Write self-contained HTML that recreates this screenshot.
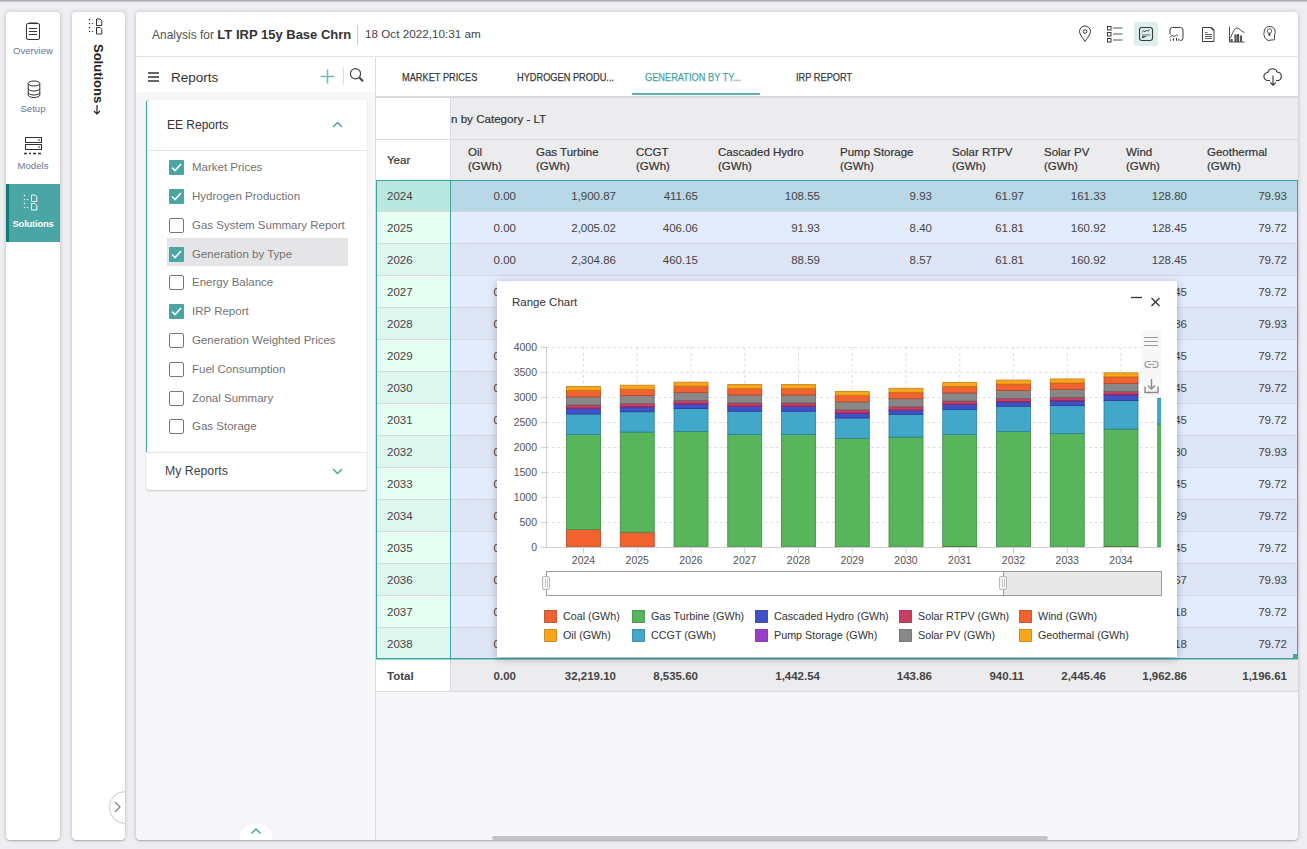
<!DOCTYPE html>
<html><head><meta charset="utf-8">
<style>
*{box-sizing:border-box;margin:0;padding:0}
html,body{width:1307px;height:849px;overflow:hidden}
body{background:#ededf2;font-family:"Liberation Sans",sans-serif;color:#333;position:relative;font-size:12px}
.abs{position:absolute}
.topline{left:0;top:0;width:1307px;height:2px;background:linear-gradient(#9a9a9e,#d8d8dc)}
.card{position:absolute;background:#fff;border-radius:4px;box-shadow:0 0 4px rgba(0,0,0,.2),0 1px 1px rgba(0,0,0,.18)}
.nav{left:6px;top:12px;width:54px;height:828px}
.nav2{left:72px;top:12px;width:53px;height:828px;overflow:hidden}
.main{left:136px;top:12px;width:1162px;height:828px;background:#f7f7f9;overflow:hidden}
.navitem{position:absolute;left:0;width:54px;text-align:center;font-size:10px;color:#5a6b8a}
.navitem .lbl{position:absolute;left:0;width:54px;text-align:center}
.hdr{left:0;top:0;width:1162px;height:45px;background:#fff;border-bottom:1px solid #e2e2e6}
.t{position:absolute;white-space:nowrap}
</style></head><body>
<div class="abs topline"></div>

<!-- left nav -->
<div class="card nav">
  <svg class="abs" style="left:19px;top:9px" width="16" height="20" viewBox="0 0 16 20" fill="none" stroke="#333" stroke-width="1">
    <rect x="1.5" y="2.5" width="13" height="16" rx="1.5"/><path d="M4 7.5h8M4 10.5h8M4 13.5h8M5 1v2M7 1v2M9 1v2M11 1v2"/>
  </svg>
  <div class="t" style="left:0;width:54px;text-align:center;top:33px;font-size:9.6px;color:#667796">Overview</div>
  <svg class="abs" style="left:20px;top:68px" width="16" height="20" viewBox="0 0 16 20" fill="none" stroke="#333" stroke-width="1">
    <ellipse cx="8" cy="3.5" rx="5.8" ry="2.5"/><path d="M2.2 3.5v11.5c0 1.4 2.6 2.5 5.8 2.5s5.8-1.1 5.8-2.5V3.5M2.2 8.5c0 1.4 2.6 2.5 5.8 2.5s5.8-1.1 5.8-2.5M2.2 12.5c0 1.4 2.6 2.5 5.8 2.5s5.8-1.1 5.8-2.5"/>
  </svg>
  <div class="t" style="left:0;width:54px;text-align:center;top:90.5px;font-size:9.6px;color:#667796">Setup</div>
  <svg class="abs" style="left:18px;top:125px" width="20" height="20" viewBox="0 0 20 20" fill="none" stroke="#333" stroke-width="1">
    <rect x="1.5" y="0.5" width="16" height="5"/><rect x="1.5" y="7.5" width="16" height="5"/><path d="M14 3h2M14 10h2"/><path d="M0 16.5h3M5 16.5h2M9 16.5h3M14 16.5h3" stroke-width="1.5"/>
  </svg>
  <div class="t" style="left:0;width:54px;text-align:center;top:148px;font-size:9.6px;color:#667796">Models</div>
  <div class="abs" style="left:0;top:172px;width:54px;height:58px;background:#4aa5a5;border-left:3px solid #137a78"></div>
  <svg class="abs" style="left:17px;top:182px" width="16" height="18" viewBox="0 0 16 18" fill="none" stroke="#fff" stroke-width="1"><g fill="#fff" stroke="none"><circle cx="1.5" cy="1.5" r="0.75"/><circle cx="1.5" cy="5.5" r="0.75"/><circle cx="1.5" cy="9.5" r="0.75"/><circle cx="1.5" cy="13.5" r="0.75"/></g><path d="M3.8 5.5h1.6M3.8 13.5h1.6" stroke-width="0.8"/><path d="M8.5 1h3.5l1.8 1.8V7.5H8.5z M8.5 9.5h3.5l1.8 1.8V16H8.5z"/></svg>
  <div class="t" style="left:0;width:54px;text-align:center;top:206px;font-size:9.4px;color:#fff;font-weight:bold;letter-spacing:-0.2px">Solutions</div>
</div>

<!-- second nav -->
<div class="card nav2">
  <svg class="abs" style="left:16px;top:6px" width="16" height="18" viewBox="0 0 16 18" fill="none" stroke="#333" stroke-width="1"><g fill="#333" stroke="none"><circle cx="1.5" cy="1.5" r="0.75"/><circle cx="1.5" cy="5.5" r="0.75"/><circle cx="1.5" cy="9.5" r="0.75"/><circle cx="1.5" cy="13.5" r="0.75"/></g><path d="M3.8 5.5h1.6M3.8 13.5h1.6" stroke-width="0.8"/><path d="M8.5 1h3.5l1.8 1.8V7.5H8.5z M8.5 9.5h3.5l1.8 1.8V16H8.5z"/></svg>
  <div class="t" style="left:34px;top:32px;transform-origin:0 0;transform:rotate(90deg);font-size:13px;font-weight:bold;color:#222">Solutions</div><svg class="abs" style="left:20px;top:93px" width="10" height="10" viewBox="0 0 10 10" fill="none" stroke="#222" stroke-width="1.2"><path d="M5 0v9M2 6l3 3 3-3"/></svg>
  <div class="abs" style="left:37px;top:779px;width:33px;height:33px;border-radius:50%;background:#fff;border:1px solid #d0d0d0;box-shadow:0 0 2px rgba(0,0,0,.1)"></div>
  <svg class="abs" style="left:41px;top:789px" width="10" height="12" viewBox="0 0 10 12" fill="none" stroke="#888" stroke-width="1.3"><path d="M2 1l5 5-5 5"/></svg>
</div>

<!-- main -->
<div class="card main">
  <div class="abs hdr">
    <div class="t" style="left:16px;top:15px;font-size:12px;color:#555">Analysis for <b style="font-size:13px;color:#333">LT IRP 15y Base Chrn</b></div>
    <div class="abs" style="left:221px;top:13px;width:1px;height:20px;background:#ccc"></div>
    <div class="t" style="left:229px;top:15px;font-size:11.7px;color:#444">18 Oct 2022,10:31 am</div>
  </div>
    <!-- HDRICONS -->
    <svg class="abs" style="left:942px;top:13px" width="14" height="18" viewBox="0 0 14 18" fill="none" stroke="#3a3a3a" stroke-width="1"><path d="M7 16.5C4 12 1.5 9 1.5 6.5a5.5 5.5 0 0 1 11 0C12.5 9 10 12 7 16.5z"/><circle cx="7" cy="6.5" r="1.8"/></svg>
    <svg class="abs" style="left:970px;top:13px" width="18" height="18" viewBox="0 0 18 18" fill="none" stroke="#3a3a3a" stroke-width="1"><rect x="1.5" y="1.5" width="3.5" height="3.5"/><rect x="1.5" y="7.5" width="3.5" height="3.5"/><rect x="1.5" y="13.5" width="3.5" height="3.5"/><path d="M7 3h9.5M7 9h9.5M7 15h9.5" stroke="#555"/></svg>
    <div class="abs" style="left:998px;top:10px;width:24px;height:24px;border-radius:3px;background:#dcefef"></div>
    <svg class="abs" style="left:1002px;top:14px" width="16" height="16" viewBox="0 0 16 16" fill="none" stroke="#3a3a3a" stroke-width="1"><rect x="1.5" y="1.5" width="13" height="13" rx="2.5" stroke-width="1.1"/><path d="M4 6.5l1.5-2 1.5 1.5 1.5-2 1.5 1.5 1.5-2" stroke-width="0.8"/><path d="M4 8.8h8.5" stroke="#888" stroke-width="1.3"/><path d="M4 10.2h5.5L4 12.2z" fill="#333" stroke="none"/></svg>
    <svg class="abs" style="left:1032px;top:14px" width="16" height="16" viewBox="0 0 16 16" fill="none" stroke="#3a3a3a" stroke-width="1"><path d="M2 8.5V4a2.5 2.5 0 0 1 2.5-2.5h8A2.5 2.5 0 0 1 15 4v8a2.5 2.5 0 0 1-2.5 2.5H12"/><path d="M1.5 11.5l2.5-2 2 1 2.5-1.5 1.5 1" stroke-width="0.9"/><path d="M2.5 14.8v-1.3M5.5 14.8v-2.6M8.5 14.8v-3M10.8 14.8v-2" stroke-width="1.1"/></svg>
    <svg class="abs" style="left:1065px;top:14px" width="15" height="17" viewBox="0 0 15 17" fill="none" stroke="#3a3a3a" stroke-width="1"><path d="M1.5 1.5h8.5l3 3v11h-11.5z"/><path d="M10 1.5l3 3" stroke-width="1.6"/><path d="M4 6.5h2.5" stroke-width="0.8"/><path d="M4 8.5h7M4 10.5h7M4 12.5h7" stroke="#555" stroke-width="1"/></svg>
    <svg class="abs" style="left:1092px;top:14px" width="17" height="17" viewBox="0 0 17 17" fill="none" stroke="#3a3a3a" stroke-width="1"><path d="M1.5 0.5v15.5h15" stroke-width="0.9"/><path d="M2.5 12C4.5 7 6.5 2 9 2s4 3.5 7.5 4.5" stroke-width="0.9"/><path d="M3.5 16v-3M7.5 16v-7.5M10 16v-8M13 16v-6.5" stroke="#555" stroke-width="2.2"/></svg>
    <svg class="abs" style="left:1127px;top:14px" width="14" height="16" viewBox="0 0 14 16" fill="none" stroke="#3a3a3a" stroke-width="1"><path d="M5 14.5C4 13 1 12.5 1.5 10C0.5 9 0.8 7.5 1.2 6.5C1 2.5 3.5 0.5 6.5 0.5C10 0.5 12.5 3 12.2 6.5C12 8.5 11 9.5 11.5 11C12 12.5 11.5 13.5 11 14C9.5 13.5 7 14.5 5 14.5z"/><circle cx="6.5" cy="5" r="2.2" stroke="#666"/><path d="M5.6 7.3h1.8v2.5H5.6z" fill="#333" stroke="none"/></svg>
    <!-- /HDRICONS -->
  <!-- reports panel -->
  <div class="abs" style="left:0;top:45px;width:239px;height:35px;background:#fff"></div>
  <div class="abs" style="left:239px;top:45px;width:1px;height:783px;background:#dcdce0"></div>
  <svg class="abs" style="left:12px;top:60px" width="12" height="10" viewBox="0 0 12 10" stroke="#333" stroke-width="1.5"><path d="M0 1h11M0 5h11M0 9h11"/></svg>
  <div class="t" style="left:35px;top:58px;font-size:13.5px;color:#333">Reports</div>
  <svg class="abs" style="left:183px;top:56px" width="17" height="17" viewBox="0 0 17 17" stroke="#72bdbd" stroke-width="1.6"><path d="M8.5 1.5v14M1.5 8.5h14"/></svg>
  <div class="abs" style="left:207px;top:55px;width:1px;height:18px;background:#ddd"></div>
  <svg class="abs" style="left:213px;top:55px" width="16" height="16" viewBox="0 0 16 16" fill="none" stroke="#444" stroke-width="1.2"><circle cx="6.5" cy="6.8" r="5.1"/><path d="M10.2 10.5l3.8 3.8" stroke-width="2"/></svg>

  <div class="abs" style="left:10px;top:88px;width:221px;height:353px;background:#fff;border-left:1px solid #4aa5a5;box-shadow:0 1px 2px rgba(0,0,0,.15);border-radius:3px 0 0 0"></div>
  <div class="t" style="left:31px;top:106px;font-size:12px;color:#333">EE Reports</div>
  <svg class="abs" style="left:196px;top:109px" width="11" height="7" viewBox="0 0 11 7" fill="none" stroke="#4aa5a5" stroke-width="1.5"><path d="M1 6l4.5-4.5L10 6"/></svg>
  <div class="abs" style="left:11px;top:138px;width:220px;height:1px;background:#e6e6ea"></div>
  <div class="abs" style="left:31px;top:226px;width:181px;height:28px;background:#e5e5e7"></div>
  <div class="abs" style="left:33px;top:148px;width:15px;height:15px;background:#4aa5a5;border-radius:1px"></div><svg class="abs" style="left:33px;top:148px" width="15" height="15" viewBox="0 0 15 15" fill="none" stroke="#fff" stroke-width="1.6"><path d="M3 7.5l3 3 6-6.5"/></svg>
  <div class="t" style="left:56px;top:149px;font-size:11.5px;color:#727272">Market Prices</div>
  <div class="abs" style="left:33px;top:177px;width:15px;height:15px;background:#4aa5a5;border-radius:1px"></div><svg class="abs" style="left:33px;top:177px" width="15" height="15" viewBox="0 0 15 15" fill="none" stroke="#fff" stroke-width="1.6"><path d="M3 7.5l3 3 6-6.5"/></svg>
  <div class="t" style="left:56px;top:178px;font-size:11.5px;color:#727272">Hydrogen Production</div>
  <div class="abs" style="left:33px;top:206px;width:15px;height:15px;border:1.5px solid #777;border-radius:2px;background:#fff"></div>
  <div class="t" style="left:56px;top:207px;font-size:11.5px;color:#727272">Gas System Summary Report</div>
  <div class="abs" style="left:33px;top:235px;width:15px;height:15px;background:#4aa5a5;border-radius:1px"></div><svg class="abs" style="left:33px;top:235px" width="15" height="15" viewBox="0 0 15 15" fill="none" stroke="#fff" stroke-width="1.6"><path d="M3 7.5l3 3 6-6.5"/></svg>
  <div class="t" style="left:56px;top:236px;font-size:11.5px;color:#727272">Generation by Type</div>
  <div class="abs" style="left:33px;top:263px;width:15px;height:15px;border:1.5px solid #777;border-radius:2px;background:#fff"></div>
  <div class="t" style="left:56px;top:264px;font-size:11.5px;color:#727272">Energy Balance</div>
  <div class="abs" style="left:33px;top:292px;width:15px;height:15px;background:#4aa5a5;border-radius:1px"></div><svg class="abs" style="left:33px;top:292px" width="15" height="15" viewBox="0 0 15 15" fill="none" stroke="#fff" stroke-width="1.6"><path d="M3 7.5l3 3 6-6.5"/></svg>
  <div class="t" style="left:56px;top:293px;font-size:11.5px;color:#727272">IRP Report</div>
  <div class="abs" style="left:33px;top:321px;width:15px;height:15px;border:1.5px solid #777;border-radius:2px;background:#fff"></div>
  <div class="t" style="left:56px;top:322px;font-size:11.5px;color:#727272">Generation Weighted Prices</div>
  <div class="abs" style="left:33px;top:350px;width:15px;height:15px;border:1.5px solid #777;border-radius:2px;background:#fff"></div>
  <div class="t" style="left:56px;top:351px;font-size:11.5px;color:#727272">Fuel Consumption</div>
  <div class="abs" style="left:33px;top:379px;width:15px;height:15px;border:1.5px solid #777;border-radius:2px;background:#fff"></div>
  <div class="t" style="left:56px;top:380px;font-size:11.5px;color:#727272">Zonal Summary</div>
  <div class="abs" style="left:33px;top:407px;width:15px;height:15px;border:1.5px solid #777;border-radius:2px;background:#fff"></div>
  <div class="t" style="left:56px;top:408px;font-size:11.5px;color:#727272">Gas Storage</div>
  <div class="abs" style="left:10px;top:440px;width:221px;height:38px;background:#fff;box-shadow:0 1px 2px rgba(0,0,0,.2);border-top:1px solid #e6e6ea;border-radius:0 0 3px 3px"></div>
  <div class="t" style="left:29px;top:452px;font-size:12.3px;color:#444">My Reports</div>
  <svg class="abs" style="left:196px;top:456px" width="11" height="7" viewBox="0 0 11 7" fill="none" stroke="#4aa5a5" stroke-width="1.5"><path d="M1 1l4.5 4.5L10 1"/></svg>
  <div class="abs" style="left:104px;top:812px;width:32px;height:24px;border-radius:50%;background:#fff"></div>
  <svg class="abs" style="left:114px;top:815px" width="12" height="8" viewBox="0 0 12 8" fill="none" stroke="#4aa5a5" stroke-width="1.5"><path d="M1.5 6.5l4.5-4.5 4.5 4.5"/></svg>
  <!-- TABLE -->
  <div class="abs" style="left:240px;top:45px;width:922px;height:39px;background:#fff"></div>
  <div class="abs" style="left:240px;top:84px;width:922px;height:2px;background:#dadade"></div>
  <div class="t" style="left:266px;top:59px;font-size:10.5px;color:#3a3a3a;transform:scaleX(0.88);transform-origin:0 0;-webkit-text-stroke:0.25px #3a3a3a">MARKET PRICES</div>
  <div class="t" style="left:381px;top:59px;font-size:10.5px;color:#3a3a3a;transform:scaleX(0.88);transform-origin:0 0;-webkit-text-stroke:0.25px #3a3a3a">HYDROGEN PRODU...</div>
  <div class="t" style="left:509px;top:59px;font-size:10.5px;color:#4aa5a5;transform:scaleX(0.88);transform-origin:0 0;-webkit-text-stroke:0.25px #4aa5a5">GENERATION BY TY...</div>
  <div class="t" style="left:660px;top:59px;font-size:10.5px;color:#3a3a3a;transform:scaleX(0.88);transform-origin:0 0;-webkit-text-stroke:0.25px #3a3a3a">IRP REPORT</div>
  <div class="abs" style="left:496px;top:81px;width:128px;height:2px;background:#5fb3b3"></div>
  <svg class="abs" style="left:1126px;top:54px" width="22" height="21" viewBox="0 0 22 21" fill="none" stroke="#333" stroke-width="1.1"><path d="M8 14.5H6A4 4 0 0 1 5.8 6.5A4.8 4.8 0 0 1 15 6A4.4 4.4 0 0 1 16.5 14.5H14"/><path d="M11 9.5V19.2M8.2 16.4l2.8 2.8 2.8-2.8"/></svg>
  <div class="abs" style="left:240px;top:86px;width:922px;height:82px;background:#ececef"></div>
  <div class="abs" style="left:240px;top:86px;width:74px;height:82px;background:#fff"></div>
  <div class="abs" style="left:240px;top:127px;width:922px;height:1px;background:#dcdce0"></div>
  <div class="abs" style="left:314px;top:86px;width:1px;height:82px;background:#dcdce0"></div>
  <div class="t" style="left:315px;top:100px;font-size:11.6px;color:#333;-webkit-text-stroke:0.2px #333">n by Category - LT</div>
  <div class="t" style="left:251px;top:142px;font-size:11.5px;color:#333;-webkit-text-stroke:0.2px #333">Year</div>
  <div class="t" style="left:332px;top:133px;font-size:11.5px;line-height:14px;color:#333;-webkit-text-stroke:0.2px #333">Oil<br>(GWh)</div>
  <div class="t" style="left:400px;top:133px;font-size:11.5px;line-height:14px;color:#333;-webkit-text-stroke:0.2px #333">Gas Turbine<br>(GWh)</div>
  <div class="t" style="left:500px;top:133px;font-size:11.5px;line-height:14px;color:#333;-webkit-text-stroke:0.2px #333">CCGT<br>(GWh)</div>
  <div class="t" style="left:582px;top:133px;font-size:11.5px;line-height:14px;color:#333;-webkit-text-stroke:0.2px #333">Cascaded Hydro<br>(GWh)</div>
  <div class="t" style="left:704px;top:133px;font-size:11.5px;line-height:14px;color:#333;-webkit-text-stroke:0.2px #333">Pump Storage<br>(GWh)</div>
  <div class="t" style="left:816px;top:133px;font-size:11.5px;line-height:14px;color:#333;-webkit-text-stroke:0.2px #333">Solar RTPV<br>(GWh)</div>
  <div class="t" style="left:908px;top:133px;font-size:11.5px;line-height:14px;color:#333;-webkit-text-stroke:0.2px #333">Solar PV<br>(GWh)</div>
  <div class="t" style="left:990px;top:133px;font-size:11.5px;line-height:14px;color:#333;-webkit-text-stroke:0.2px #333">Wind<br>(GWh)</div>
  <div class="t" style="left:1071px;top:133px;font-size:11.5px;line-height:14px;color:#333;-webkit-text-stroke:0.2px #333">Geothermal<br>(GWh)</div>
  <div class="abs" style="left:240px;top:168px;width:74px;height:32px;background:#b8e8de"></div>
  <div class="abs" style="left:314px;top:168px;width:847px;height:32px;background:#b8d8e8"></div>
  <div class="abs" style="left:240px;top:199px;width:921px;height:1px;background:#d6d8dc"></div>
  <div class="t" style="left:251px;top:178px;font-size:11.5px;color:#444">2024</div>
  <div class="t" style="left:322px;width:58px;text-align:right;top:178px;font-size:11.5px;color:#444">0.00</div>
  <div class="t" style="left:390px;width:90px;text-align:right;top:178px;font-size:11.5px;color:#444">1,900.87</div>
  <div class="t" style="left:490px;width:72px;text-align:right;top:178px;font-size:11.5px;color:#444">411.65</div>
  <div class="t" style="left:572px;width:112px;text-align:right;top:178px;font-size:11.5px;color:#444">108.55</div>
  <div class="t" style="left:694px;width:102px;text-align:right;top:178px;font-size:11.5px;color:#444">9.93</div>
  <div class="t" style="left:806px;width:82px;text-align:right;top:178px;font-size:11.5px;color:#444">61.97</div>
  <div class="t" style="left:898px;width:72px;text-align:right;top:178px;font-size:11.5px;color:#444">161.33</div>
  <div class="t" style="left:980px;width:71px;text-align:right;top:178px;font-size:11.5px;color:#444">128.80</div>
  <div class="t" style="left:1061px;width:90px;text-align:right;top:178px;font-size:11.5px;color:#444">79.93</div>
  <div class="abs" style="left:240px;top:200px;width:74px;height:32px;background:#e6fff2"></div>
  <div class="abs" style="left:314px;top:200px;width:847px;height:32px;background:#e3ecfd"></div>
  <div class="abs" style="left:240px;top:231px;width:921px;height:1px;background:#d6d8dc"></div>
  <div class="t" style="left:251px;top:210px;font-size:11.5px;color:#444">2025</div>
  <div class="t" style="left:322px;width:58px;text-align:right;top:210px;font-size:11.5px;color:#444">0.00</div>
  <div class="t" style="left:390px;width:90px;text-align:right;top:210px;font-size:11.5px;color:#444">2,005.02</div>
  <div class="t" style="left:490px;width:72px;text-align:right;top:210px;font-size:11.5px;color:#444">406.06</div>
  <div class="t" style="left:572px;width:112px;text-align:right;top:210px;font-size:11.5px;color:#444">91.93</div>
  <div class="t" style="left:694px;width:102px;text-align:right;top:210px;font-size:11.5px;color:#444">8.40</div>
  <div class="t" style="left:806px;width:82px;text-align:right;top:210px;font-size:11.5px;color:#444">61.81</div>
  <div class="t" style="left:898px;width:72px;text-align:right;top:210px;font-size:11.5px;color:#444">160.92</div>
  <div class="t" style="left:980px;width:71px;text-align:right;top:210px;font-size:11.5px;color:#444">128.45</div>
  <div class="t" style="left:1061px;width:90px;text-align:right;top:210px;font-size:11.5px;color:#444">79.72</div>
  <div class="abs" style="left:240px;top:232px;width:74px;height:32px;background:#def7ee"></div>
  <div class="abs" style="left:314px;top:232px;width:847px;height:32px;background:#dde5f7"></div>
  <div class="abs" style="left:240px;top:263px;width:921px;height:1px;background:#d6d8dc"></div>
  <div class="t" style="left:251px;top:242px;font-size:11.5px;color:#444">2026</div>
  <div class="t" style="left:322px;width:58px;text-align:right;top:242px;font-size:11.5px;color:#444">0.00</div>
  <div class="t" style="left:390px;width:90px;text-align:right;top:242px;font-size:11.5px;color:#444">2,304.86</div>
  <div class="t" style="left:490px;width:72px;text-align:right;top:242px;font-size:11.5px;color:#444">460.15</div>
  <div class="t" style="left:572px;width:112px;text-align:right;top:242px;font-size:11.5px;color:#444">88.59</div>
  <div class="t" style="left:694px;width:102px;text-align:right;top:242px;font-size:11.5px;color:#444">8.57</div>
  <div class="t" style="left:806px;width:82px;text-align:right;top:242px;font-size:11.5px;color:#444">61.81</div>
  <div class="t" style="left:898px;width:72px;text-align:right;top:242px;font-size:11.5px;color:#444">160.92</div>
  <div class="t" style="left:980px;width:71px;text-align:right;top:242px;font-size:11.5px;color:#444">128.45</div>
  <div class="t" style="left:1061px;width:90px;text-align:right;top:242px;font-size:11.5px;color:#444">79.72</div>
  <div class="abs" style="left:240px;top:264px;width:74px;height:32px;background:#e6fff2"></div>
  <div class="abs" style="left:314px;top:264px;width:847px;height:32px;background:#e3ecfd"></div>
  <div class="abs" style="left:240px;top:295px;width:921px;height:1px;background:#d6d8dc"></div>
  <div class="t" style="left:251px;top:274px;font-size:11.5px;color:#444">2027</div>
  <div class="t" style="left:322px;width:58px;text-align:right;top:274px;font-size:11.5px;color:#444">0.00</div>
  <div class="t" style="left:980px;width:71px;text-align:right;top:274px;font-size:11.5px;color:#444">128.45</div>
  <div class="t" style="left:1061px;width:90px;text-align:right;top:274px;font-size:11.5px;color:#444">79.72</div>
  <div class="abs" style="left:240px;top:296px;width:74px;height:32px;background:#def7ee"></div>
  <div class="abs" style="left:314px;top:296px;width:847px;height:32px;background:#dde5f7"></div>
  <div class="abs" style="left:240px;top:327px;width:921px;height:1px;background:#d6d8dc"></div>
  <div class="t" style="left:251px;top:306px;font-size:11.5px;color:#444">2028</div>
  <div class="t" style="left:322px;width:58px;text-align:right;top:306px;font-size:11.5px;color:#444">0.00</div>
  <div class="t" style="left:980px;width:71px;text-align:right;top:306px;font-size:11.5px;color:#444">127.36</div>
  <div class="t" style="left:1061px;width:90px;text-align:right;top:306px;font-size:11.5px;color:#444">79.93</div>
  <div class="abs" style="left:240px;top:328px;width:74px;height:32px;background:#e6fff2"></div>
  <div class="abs" style="left:314px;top:328px;width:847px;height:32px;background:#e3ecfd"></div>
  <div class="abs" style="left:240px;top:359px;width:921px;height:1px;background:#d6d8dc"></div>
  <div class="t" style="left:251px;top:338px;font-size:11.5px;color:#444">2029</div>
  <div class="t" style="left:322px;width:58px;text-align:right;top:338px;font-size:11.5px;color:#444">0.00</div>
  <div class="t" style="left:980px;width:71px;text-align:right;top:338px;font-size:11.5px;color:#444">128.45</div>
  <div class="t" style="left:1061px;width:90px;text-align:right;top:338px;font-size:11.5px;color:#444">79.72</div>
  <div class="abs" style="left:240px;top:360px;width:74px;height:32px;background:#def7ee"></div>
  <div class="abs" style="left:314px;top:360px;width:847px;height:32px;background:#dde5f7"></div>
  <div class="abs" style="left:240px;top:391px;width:921px;height:1px;background:#d6d8dc"></div>
  <div class="t" style="left:251px;top:370px;font-size:11.5px;color:#444">2030</div>
  <div class="t" style="left:322px;width:58px;text-align:right;top:370px;font-size:11.5px;color:#444">0.00</div>
  <div class="t" style="left:980px;width:71px;text-align:right;top:370px;font-size:11.5px;color:#444">128.45</div>
  <div class="t" style="left:1061px;width:90px;text-align:right;top:370px;font-size:11.5px;color:#444">79.72</div>
  <div class="abs" style="left:240px;top:392px;width:74px;height:32px;background:#e6fff2"></div>
  <div class="abs" style="left:314px;top:392px;width:847px;height:32px;background:#e3ecfd"></div>
  <div class="abs" style="left:240px;top:423px;width:921px;height:1px;background:#d6d8dc"></div>
  <div class="t" style="left:251px;top:402px;font-size:11.5px;color:#444">2031</div>
  <div class="t" style="left:322px;width:58px;text-align:right;top:402px;font-size:11.5px;color:#444">0.00</div>
  <div class="t" style="left:980px;width:71px;text-align:right;top:402px;font-size:11.5px;color:#444">128.45</div>
  <div class="t" style="left:1061px;width:90px;text-align:right;top:402px;font-size:11.5px;color:#444">79.72</div>
  <div class="abs" style="left:240px;top:424px;width:74px;height:32px;background:#def7ee"></div>
  <div class="abs" style="left:314px;top:424px;width:847px;height:32px;background:#dde5f7"></div>
  <div class="abs" style="left:240px;top:455px;width:921px;height:1px;background:#d6d8dc"></div>
  <div class="t" style="left:251px;top:434px;font-size:11.5px;color:#444">2032</div>
  <div class="t" style="left:322px;width:58px;text-align:right;top:434px;font-size:11.5px;color:#444">0.00</div>
  <div class="t" style="left:980px;width:71px;text-align:right;top:434px;font-size:11.5px;color:#444">126.30</div>
  <div class="t" style="left:1061px;width:90px;text-align:right;top:434px;font-size:11.5px;color:#444">79.93</div>
  <div class="abs" style="left:240px;top:456px;width:74px;height:32px;background:#e6fff2"></div>
  <div class="abs" style="left:314px;top:456px;width:847px;height:32px;background:#e3ecfd"></div>
  <div class="abs" style="left:240px;top:487px;width:921px;height:1px;background:#d6d8dc"></div>
  <div class="t" style="left:251px;top:466px;font-size:11.5px;color:#444">2033</div>
  <div class="t" style="left:322px;width:58px;text-align:right;top:466px;font-size:11.5px;color:#444">0.00</div>
  <div class="t" style="left:980px;width:71px;text-align:right;top:466px;font-size:11.5px;color:#444">128.45</div>
  <div class="t" style="left:1061px;width:90px;text-align:right;top:466px;font-size:11.5px;color:#444">79.72</div>
  <div class="abs" style="left:240px;top:488px;width:74px;height:32px;background:#def7ee"></div>
  <div class="abs" style="left:314px;top:488px;width:847px;height:32px;background:#dde5f7"></div>
  <div class="abs" style="left:240px;top:519px;width:921px;height:1px;background:#d6d8dc"></div>
  <div class="t" style="left:251px;top:498px;font-size:11.5px;color:#444">2034</div>
  <div class="t" style="left:322px;width:58px;text-align:right;top:498px;font-size:11.5px;color:#444">0.00</div>
  <div class="t" style="left:980px;width:71px;text-align:right;top:498px;font-size:11.5px;color:#444">130.29</div>
  <div class="t" style="left:1061px;width:90px;text-align:right;top:498px;font-size:11.5px;color:#444">79.72</div>
  <div class="abs" style="left:240px;top:520px;width:74px;height:32px;background:#e6fff2"></div>
  <div class="abs" style="left:314px;top:520px;width:847px;height:32px;background:#e3ecfd"></div>
  <div class="abs" style="left:240px;top:551px;width:921px;height:1px;background:#d6d8dc"></div>
  <div class="t" style="left:251px;top:530px;font-size:11.5px;color:#444">2035</div>
  <div class="t" style="left:322px;width:58px;text-align:right;top:530px;font-size:11.5px;color:#444">0.00</div>
  <div class="t" style="left:980px;width:71px;text-align:right;top:530px;font-size:11.5px;color:#444">128.45</div>
  <div class="t" style="left:1061px;width:90px;text-align:right;top:530px;font-size:11.5px;color:#444">79.72</div>
  <div class="abs" style="left:240px;top:552px;width:74px;height:32px;background:#def7ee"></div>
  <div class="abs" style="left:314px;top:552px;width:847px;height:32px;background:#dde5f7"></div>
  <div class="abs" style="left:240px;top:583px;width:921px;height:1px;background:#d6d8dc"></div>
  <div class="t" style="left:251px;top:562px;font-size:11.5px;color:#444">2036</div>
  <div class="t" style="left:322px;width:58px;text-align:right;top:562px;font-size:11.5px;color:#444">0.00</div>
  <div class="t" style="left:980px;width:71px;text-align:right;top:562px;font-size:11.5px;color:#444">131.67</div>
  <div class="t" style="left:1061px;width:90px;text-align:right;top:562px;font-size:11.5px;color:#444">79.93</div>
  <div class="abs" style="left:240px;top:584px;width:74px;height:32px;background:#e6fff2"></div>
  <div class="abs" style="left:314px;top:584px;width:847px;height:32px;background:#e3ecfd"></div>
  <div class="abs" style="left:240px;top:615px;width:921px;height:1px;background:#d6d8dc"></div>
  <div class="t" style="left:251px;top:594px;font-size:11.5px;color:#444">2037</div>
  <div class="t" style="left:322px;width:58px;text-align:right;top:594px;font-size:11.5px;color:#444">0.00</div>
  <div class="t" style="left:980px;width:71px;text-align:right;top:594px;font-size:11.5px;color:#444">130.18</div>
  <div class="t" style="left:1061px;width:90px;text-align:right;top:594px;font-size:11.5px;color:#444">79.72</div>
  <div class="abs" style="left:240px;top:616px;width:74px;height:32px;background:#def7ee"></div>
  <div class="abs" style="left:314px;top:616px;width:847px;height:32px;background:#dde5f7"></div>
  <div class="t" style="left:251px;top:626px;font-size:11.5px;color:#444">2038</div>
  <div class="t" style="left:322px;width:58px;text-align:right;top:626px;font-size:11.5px;color:#444">0.00</div>
  <div class="t" style="left:980px;width:71px;text-align:right;top:626px;font-size:11.5px;color:#444">130.18</div>
  <div class="t" style="left:1061px;width:90px;text-align:right;top:626px;font-size:11.5px;color:#444">79.72</div>
  <div class="abs" style="left:240px;top:168px;width:922px;height:479px;border:1px solid #3fa3a0;border-width:1px 1px 1px 1px;box-shadow:0 1px 0 rgba(63,163,160,.45)"></div>
  <div class="abs" style="left:314px;top:168px;width:1px;height:480px;background:#3fa3a0"></div>
  <div class="abs" style="left:1157px;top:642px;width:5px;height:5px;background:#3fa3a0"></div>
  <div class="abs" style="left:240px;top:648px;width:74px;height:31px;background:#fff"></div>
  <div class="abs" style="left:314px;top:648px;width:848px;height:31px;background:#ececef"></div>
  <div class="abs" style="left:240px;top:679px;width:922px;height:1px;background:#dcdce0"></div>
  <div class="t" style="left:251px;top:658px;font-size:11.5px;font-weight:bold;color:#444">Total</div>
  <div class="t" style="left:322px;width:58px;text-align:right;top:658px;font-size:11.5px;font-weight:bold;color:#444">0.00</div>
  <div class="t" style="left:390px;width:90px;text-align:right;top:658px;font-size:11.5px;font-weight:bold;color:#444">32,219.10</div>
  <div class="t" style="left:490px;width:72px;text-align:right;top:658px;font-size:11.5px;font-weight:bold;color:#444">8,535.60</div>
  <div class="t" style="left:572px;width:112px;text-align:right;top:658px;font-size:11.5px;font-weight:bold;color:#444">1,442.54</div>
  <div class="t" style="left:694px;width:102px;text-align:right;top:658px;font-size:11.5px;font-weight:bold;color:#444">143.86</div>
  <div class="t" style="left:806px;width:82px;text-align:right;top:658px;font-size:11.5px;font-weight:bold;color:#444">940.11</div>
  <div class="t" style="left:898px;width:72px;text-align:right;top:658px;font-size:11.5px;font-weight:bold;color:#444">2,445.46</div>
  <div class="t" style="left:980px;width:71px;text-align:right;top:658px;font-size:11.5px;font-weight:bold;color:#444">1,962.86</div>
  <div class="t" style="left:1061px;width:90px;text-align:right;top:658px;font-size:11.5px;font-weight:bold;color:#444">1,196.61</div>
  <div class="abs" style="left:356px;top:824px;width:556px;height:4px;border-radius:2px;background:#c4c4c8"></div>
  <div class="abs" style="left:314px;top:648px;width:1px;height:31px;background:#d8d8dc"></div>
  <!-- CHART -->
</div>
<!-- POPUP --><div class="abs" style="left:497px;top:281px;width:680px;height:376px;background:#fff;box-shadow:0 2px 8px rgba(0,0,0,.25)"><svg class="abs" style="left:0;top:0" width="680" height="376" viewBox="0 0 680 376" font-family="Liberation Sans, sans-serif">
<line x1="49" x2="664" y1="266.5" y2="266.5" stroke="#dedede" stroke-dasharray="3 2.6"/>
<line x1="44" x2="49" y1="266.5" y2="266.5" stroke="#cfcfcf"/>
<text x="40" y="270" text-anchor="end" font-size="10.5" fill="#555">0</text>
<line x1="49" x2="664" y1="241.5" y2="241.5" stroke="#dedede" stroke-dasharray="3 2.6"/>
<line x1="44" x2="49" y1="241.5" y2="241.5" stroke="#cfcfcf"/>
<text x="40" y="245" text-anchor="end" font-size="10.5" fill="#555">500</text>
<line x1="49" x2="664" y1="216.5" y2="216.5" stroke="#dedede" stroke-dasharray="3 2.6"/>
<line x1="44" x2="49" y1="216.5" y2="216.5" stroke="#cfcfcf"/>
<text x="40" y="220" text-anchor="end" font-size="10.5" fill="#555">1000</text>
<line x1="49" x2="664" y1="191.5" y2="191.5" stroke="#dedede" stroke-dasharray="3 2.6"/>
<line x1="44" x2="49" y1="191.5" y2="191.5" stroke="#cfcfcf"/>
<text x="40" y="195" text-anchor="end" font-size="10.5" fill="#555">1500</text>
<line x1="49" x2="664" y1="166.5" y2="166.5" stroke="#dedede" stroke-dasharray="3 2.6"/>
<line x1="44" x2="49" y1="166.5" y2="166.5" stroke="#cfcfcf"/>
<text x="40" y="170" text-anchor="end" font-size="10.5" fill="#555">2000</text>
<line x1="49" x2="664" y1="141.5" y2="141.5" stroke="#dedede" stroke-dasharray="3 2.6"/>
<line x1="44" x2="49" y1="141.5" y2="141.5" stroke="#cfcfcf"/>
<text x="40" y="145" text-anchor="end" font-size="10.5" fill="#555">2500</text>
<line x1="49" x2="664" y1="116.5" y2="116.5" stroke="#dedede" stroke-dasharray="3 2.6"/>
<line x1="44" x2="49" y1="116.5" y2="116.5" stroke="#cfcfcf"/>
<text x="40" y="120" text-anchor="end" font-size="10.5" fill="#555">3000</text>
<line x1="49" x2="664" y1="91.5" y2="91.5" stroke="#dedede" stroke-dasharray="3 2.6"/>
<line x1="44" x2="49" y1="91.5" y2="91.5" stroke="#cfcfcf"/>
<text x="40" y="95" text-anchor="end" font-size="10.5" fill="#555">3500</text>
<line x1="49" x2="664" y1="66.5" y2="66.5" stroke="#dedede" stroke-dasharray="3 2.6"/>
<line x1="44" x2="49" y1="66.5" y2="66.5" stroke="#cfcfcf"/>
<text x="40" y="70" text-anchor="end" font-size="10.5" fill="#555">4000</text>
<line x1="86.5" x2="86.5" y1="66" y2="266" stroke="#dedede" stroke-dasharray="3 2.6"/>
<line x1="140.25" x2="140.25" y1="66" y2="266" stroke="#dedede" stroke-dasharray="3 2.6"/>
<line x1="194.0" x2="194.0" y1="66" y2="266" stroke="#dedede" stroke-dasharray="3 2.6"/>
<line x1="247.75" x2="247.75" y1="66" y2="266" stroke="#dedede" stroke-dasharray="3 2.6"/>
<line x1="301.5" x2="301.5" y1="66" y2="266" stroke="#dedede" stroke-dasharray="3 2.6"/>
<line x1="355.25" x2="355.25" y1="66" y2="266" stroke="#dedede" stroke-dasharray="3 2.6"/>
<line x1="409.0" x2="409.0" y1="66" y2="266" stroke="#dedede" stroke-dasharray="3 2.6"/>
<line x1="462.75" x2="462.75" y1="66" y2="266" stroke="#dedede" stroke-dasharray="3 2.6"/>
<line x1="516.5" x2="516.5" y1="66" y2="266" stroke="#dedede" stroke-dasharray="3 2.6"/>
<line x1="570.25" x2="570.25" y1="66" y2="266" stroke="#dedede" stroke-dasharray="3 2.6"/>
<line x1="624.0" x2="624.0" y1="66" y2="266" stroke="#dedede" stroke-dasharray="3 2.6"/>
<defs><clipPath id="pc"><rect x="49" y="19" width="615" height="260"/></clipPath></defs>
<g clip-path="url(#pc)">
<rect x="69.5" y="248.55" width="34" height="17.25" fill="#f26130" stroke="#b9471f" stroke-width="0.8"/>
<rect x="69.5" y="153.51" width="34" height="95.04" fill="#58b55b" stroke="#3e8a41" stroke-width="0.8"/>
<rect x="69.5" y="132.92" width="34" height="20.58" fill="#41a8c9" stroke="#2e7e99" stroke-width="0.8"/>
<rect x="69.5" y="127.50" width="34" height="5.43" fill="#3f51c8" stroke="#2d3a94" stroke-width="0.8"/>
<rect x="69.5" y="127.00" width="34" height="0.50" fill="#9a3fc8" stroke="#702c93" stroke-width="0.8"/>
<rect x="69.5" y="123.90" width="34" height="3.10" fill="#c93d62" stroke="#962c48" stroke-width="0.8"/>
<rect x="69.5" y="115.83" width="34" height="8.07" fill="#888888" stroke="#666666" stroke-width="0.8"/>
<rect x="69.5" y="109.39" width="34" height="6.44" fill="#f26130" stroke="#b9471f" stroke-width="0.8"/>
<rect x="69.5" y="105.40" width="34" height="4.00" fill="#f9a61d" stroke="#c27f10" stroke-width="0.8"/>
<rect x="123.25" y="251.30" width="34" height="14.50" fill="#f26130" stroke="#b9471f" stroke-width="0.8"/>
<rect x="123.25" y="151.05" width="34" height="100.25" fill="#58b55b" stroke="#3e8a41" stroke-width="0.8"/>
<rect x="123.25" y="130.75" width="34" height="20.30" fill="#41a8c9" stroke="#2e7e99" stroke-width="0.8"/>
<rect x="123.25" y="126.15" width="34" height="4.60" fill="#3f51c8" stroke="#2d3a94" stroke-width="0.8"/>
<rect x="123.25" y="125.73" width="34" height="0.42" fill="#9a3fc8" stroke="#702c93" stroke-width="0.8"/>
<rect x="123.25" y="122.64" width="34" height="3.09" fill="#c93d62" stroke="#962c48" stroke-width="0.8"/>
<rect x="123.25" y="114.59" width="34" height="8.05" fill="#888888" stroke="#666666" stroke-width="0.8"/>
<rect x="123.25" y="108.17" width="34" height="6.42" fill="#f26130" stroke="#b9471f" stroke-width="0.8"/>
<rect x="123.25" y="104.18" width="34" height="3.99" fill="#f9a61d" stroke="#c27f10" stroke-width="0.8"/>
<rect x="177.0" y="150.56" width="34" height="115.24" fill="#58b55b" stroke="#3e8a41" stroke-width="0.8"/>
<rect x="177.0" y="127.55" width="34" height="23.01" fill="#41a8c9" stroke="#2e7e99" stroke-width="0.8"/>
<rect x="177.0" y="123.12" width="34" height="4.43" fill="#3f51c8" stroke="#2d3a94" stroke-width="0.8"/>
<rect x="177.0" y="122.69" width="34" height="0.43" fill="#9a3fc8" stroke="#702c93" stroke-width="0.8"/>
<rect x="177.0" y="119.60" width="34" height="3.09" fill="#c93d62" stroke="#962c48" stroke-width="0.8"/>
<rect x="177.0" y="111.55" width="34" height="8.05" fill="#888888" stroke="#666666" stroke-width="0.8"/>
<rect x="177.0" y="105.13" width="34" height="6.42" fill="#f26130" stroke="#b9471f" stroke-width="0.8"/>
<rect x="177.0" y="101.15" width="34" height="3.99" fill="#f9a61d" stroke="#c27f10" stroke-width="0.8"/>
<rect x="230.75" y="153.55" width="34" height="112.25" fill="#58b55b" stroke="#3e8a41" stroke-width="0.8"/>
<rect x="230.75" y="130.20" width="34" height="23.35" fill="#41a8c9" stroke="#2e7e99" stroke-width="0.8"/>
<rect x="230.75" y="125.55" width="34" height="4.65" fill="#3f51c8" stroke="#2d3a94" stroke-width="0.8"/>
<rect x="230.75" y="125.10" width="34" height="0.45" fill="#9a3fc8" stroke="#702c93" stroke-width="0.8"/>
<rect x="230.75" y="122.00" width="34" height="3.10" fill="#c93d62" stroke="#962c48" stroke-width="0.8"/>
<rect x="230.75" y="113.95" width="34" height="8.05" fill="#888888" stroke="#666666" stroke-width="0.8"/>
<rect x="230.75" y="107.53" width="34" height="6.42" fill="#f26130" stroke="#b9471f" stroke-width="0.8"/>
<rect x="230.75" y="103.54" width="34" height="3.99" fill="#f9a61d" stroke="#c27f10" stroke-width="0.8"/>
<rect x="284.5" y="153.55" width="34" height="112.25" fill="#58b55b" stroke="#3e8a41" stroke-width="0.8"/>
<rect x="284.5" y="130.20" width="34" height="23.35" fill="#41a8c9" stroke="#2e7e99" stroke-width="0.8"/>
<rect x="284.5" y="125.55" width="34" height="4.65" fill="#3f51c8" stroke="#2d3a94" stroke-width="0.8"/>
<rect x="284.5" y="125.10" width="34" height="0.45" fill="#9a3fc8" stroke="#702c93" stroke-width="0.8"/>
<rect x="284.5" y="122.00" width="34" height="3.10" fill="#c93d62" stroke="#962c48" stroke-width="0.8"/>
<rect x="284.5" y="113.95" width="34" height="8.05" fill="#888888" stroke="#666666" stroke-width="0.8"/>
<rect x="284.5" y="107.58" width="34" height="6.37" fill="#f26130" stroke="#b9471f" stroke-width="0.8"/>
<rect x="284.5" y="103.59" width="34" height="4.00" fill="#f9a61d" stroke="#c27f10" stroke-width="0.8"/>
<rect x="338.25" y="157.55" width="34" height="108.25" fill="#58b55b" stroke="#3e8a41" stroke-width="0.8"/>
<rect x="338.25" y="137.00" width="34" height="20.55" fill="#41a8c9" stroke="#2e7e99" stroke-width="0.8"/>
<rect x="338.25" y="132.40" width="34" height="4.60" fill="#3f51c8" stroke="#2d3a94" stroke-width="0.8"/>
<rect x="338.25" y="131.95" width="34" height="0.45" fill="#9a3fc8" stroke="#702c93" stroke-width="0.8"/>
<rect x="338.25" y="128.85" width="34" height="3.10" fill="#c93d62" stroke="#962c48" stroke-width="0.8"/>
<rect x="338.25" y="120.80" width="34" height="8.05" fill="#888888" stroke="#666666" stroke-width="0.8"/>
<rect x="338.25" y="114.38" width="34" height="6.42" fill="#f26130" stroke="#b9471f" stroke-width="0.8"/>
<rect x="338.25" y="110.39" width="34" height="3.99" fill="#f9a61d" stroke="#c27f10" stroke-width="0.8"/>
<rect x="392.0" y="156.05" width="34" height="109.75" fill="#58b55b" stroke="#3e8a41" stroke-width="0.8"/>
<rect x="392.0" y="133.30" width="34" height="22.75" fill="#41a8c9" stroke="#2e7e99" stroke-width="0.8"/>
<rect x="392.0" y="129.30" width="34" height="4.00" fill="#3f51c8" stroke="#2d3a94" stroke-width="0.8"/>
<rect x="392.0" y="128.85" width="34" height="0.45" fill="#9a3fc8" stroke="#702c93" stroke-width="0.8"/>
<rect x="392.0" y="125.75" width="34" height="3.10" fill="#c93d62" stroke="#962c48" stroke-width="0.8"/>
<rect x="392.0" y="117.70" width="34" height="8.05" fill="#888888" stroke="#666666" stroke-width="0.8"/>
<rect x="392.0" y="111.28" width="34" height="6.42" fill="#f26130" stroke="#b9471f" stroke-width="0.8"/>
<rect x="392.0" y="107.29" width="34" height="3.99" fill="#f9a61d" stroke="#c27f10" stroke-width="0.8"/>
<rect x="445.75" y="265.30" width="34" height="0.50" fill="#f26130" stroke="#b9471f" stroke-width="0.8"/>
<rect x="445.75" y="153.55" width="34" height="111.75" fill="#58b55b" stroke="#3e8a41" stroke-width="0.8"/>
<rect x="445.75" y="128.35" width="34" height="25.20" fill="#41a8c9" stroke="#2e7e99" stroke-width="0.8"/>
<rect x="445.75" y="123.50" width="34" height="4.85" fill="#3f51c8" stroke="#2d3a94" stroke-width="0.8"/>
<rect x="445.75" y="123.05" width="34" height="0.45" fill="#9a3fc8" stroke="#702c93" stroke-width="0.8"/>
<rect x="445.75" y="119.95" width="34" height="3.10" fill="#c93d62" stroke="#962c48" stroke-width="0.8"/>
<rect x="445.75" y="111.90" width="34" height="8.05" fill="#888888" stroke="#666666" stroke-width="0.8"/>
<rect x="445.75" y="105.48" width="34" height="6.42" fill="#f26130" stroke="#b9471f" stroke-width="0.8"/>
<rect x="445.75" y="101.49" width="34" height="3.99" fill="#f9a61d" stroke="#c27f10" stroke-width="0.8"/>
<rect x="499.5" y="150.45" width="34" height="115.35" fill="#58b55b" stroke="#3e8a41" stroke-width="0.8"/>
<rect x="499.5" y="125.25" width="34" height="25.20" fill="#41a8c9" stroke="#2e7e99" stroke-width="0.8"/>
<rect x="499.5" y="120.95" width="34" height="4.30" fill="#3f51c8" stroke="#2d3a94" stroke-width="0.8"/>
<rect x="499.5" y="120.50" width="34" height="0.45" fill="#9a3fc8" stroke="#702c93" stroke-width="0.8"/>
<rect x="499.5" y="117.40" width="34" height="3.10" fill="#c93d62" stroke="#962c48" stroke-width="0.8"/>
<rect x="499.5" y="109.35" width="34" height="8.05" fill="#888888" stroke="#666666" stroke-width="0.8"/>
<rect x="499.5" y="103.03" width="34" height="6.31" fill="#f26130" stroke="#b9471f" stroke-width="0.8"/>
<rect x="499.5" y="99.04" width="34" height="4.00" fill="#f9a61d" stroke="#c27f10" stroke-width="0.8"/>
<rect x="553.25" y="152.65" width="34" height="113.15" fill="#58b55b" stroke="#3e8a41" stroke-width="0.8"/>
<rect x="553.25" y="124.65" width="34" height="28.00" fill="#41a8c9" stroke="#2e7e99" stroke-width="0.8"/>
<rect x="553.25" y="119.95" width="34" height="4.70" fill="#3f51c8" stroke="#2d3a94" stroke-width="0.8"/>
<rect x="553.25" y="119.50" width="34" height="0.45" fill="#9a3fc8" stroke="#702c93" stroke-width="0.8"/>
<rect x="553.25" y="116.40" width="34" height="3.10" fill="#c93d62" stroke="#962c48" stroke-width="0.8"/>
<rect x="553.25" y="108.35" width="34" height="8.05" fill="#888888" stroke="#666666" stroke-width="0.8"/>
<rect x="553.25" y="101.93" width="34" height="6.42" fill="#f26130" stroke="#b9471f" stroke-width="0.8"/>
<rect x="553.25" y="97.94" width="34" height="3.99" fill="#f9a61d" stroke="#c27f10" stroke-width="0.8"/>
<rect x="607.0" y="265.30" width="34" height="0.50" fill="#f26130" stroke="#b9471f" stroke-width="0.8"/>
<rect x="607.0" y="148.05" width="34" height="117.25" fill="#58b55b" stroke="#3e8a41" stroke-width="0.8"/>
<rect x="607.0" y="119.45" width="34" height="28.60" fill="#41a8c9" stroke="#2e7e99" stroke-width="0.8"/>
<rect x="607.0" y="113.95" width="34" height="5.50" fill="#3f51c8" stroke="#2d3a94" stroke-width="0.8"/>
<rect x="607.0" y="113.50" width="34" height="0.45" fill="#9a3fc8" stroke="#702c93" stroke-width="0.8"/>
<rect x="607.0" y="110.40" width="34" height="3.10" fill="#c93d62" stroke="#962c48" stroke-width="0.8"/>
<rect x="607.0" y="102.35" width="34" height="8.05" fill="#888888" stroke="#666666" stroke-width="0.8"/>
<rect x="607.0" y="95.84" width="34" height="6.51" fill="#f26130" stroke="#b9471f" stroke-width="0.8"/>
<rect x="607.0" y="91.85" width="34" height="3.99" fill="#f9a61d" stroke="#c27f10" stroke-width="0.8"/>
<rect x="660.75" y="143.00" width="34" height="122.80" fill="#58b55b" stroke="#3e8a41" stroke-width="0.8"/>
<rect x="660.75" y="116.95" width="34" height="26.05" fill="#41a8c9" stroke="#2e7e99" stroke-width="0.8"/>
<rect x="660.75" y="111.95" width="34" height="5.00" fill="#3f51c8" stroke="#2d3a94" stroke-width="0.8"/>
<rect x="660.75" y="111.50" width="34" height="0.45" fill="#9a3fc8" stroke="#702c93" stroke-width="0.8"/>
<rect x="660.75" y="108.40" width="34" height="3.10" fill="#c93d62" stroke="#962c48" stroke-width="0.8"/>
<rect x="660.75" y="100.35" width="34" height="8.05" fill="#888888" stroke="#666666" stroke-width="0.8"/>
<rect x="660.75" y="93.93" width="34" height="6.42" fill="#f26130" stroke="#b9471f" stroke-width="0.8"/>
<rect x="660.75" y="89.94" width="34" height="3.99" fill="#f9a61d" stroke="#c27f10" stroke-width="0.8"/>
</g>
<line x1="49.5" x2="49.5" y1="66" y2="266" stroke="#cfcfcf"/>
<line x1="44" x2="664" y1="266.5" y2="266.5" stroke="#cfcfcf"/>
<line x1="86.5" x2="86.5" y1="266" y2="272" stroke="#cfcfcf"/>
<text x="86.5" y="283" text-anchor="middle" font-size="10.5" fill="#555">2024</text>
<line x1="140.25" x2="140.25" y1="266" y2="272" stroke="#cfcfcf"/>
<text x="140.25" y="283" text-anchor="middle" font-size="10.5" fill="#555">2025</text>
<line x1="194.0" x2="194.0" y1="266" y2="272" stroke="#cfcfcf"/>
<text x="194.0" y="283" text-anchor="middle" font-size="10.5" fill="#555">2026</text>
<line x1="247.75" x2="247.75" y1="266" y2="272" stroke="#cfcfcf"/>
<text x="247.75" y="283" text-anchor="middle" font-size="10.5" fill="#555">2027</text>
<line x1="301.5" x2="301.5" y1="266" y2="272" stroke="#cfcfcf"/>
<text x="301.5" y="283" text-anchor="middle" font-size="10.5" fill="#555">2028</text>
<line x1="355.25" x2="355.25" y1="266" y2="272" stroke="#cfcfcf"/>
<text x="355.25" y="283" text-anchor="middle" font-size="10.5" fill="#555">2029</text>
<line x1="409.0" x2="409.0" y1="266" y2="272" stroke="#cfcfcf"/>
<text x="409.0" y="283" text-anchor="middle" font-size="10.5" fill="#555">2030</text>
<line x1="462.75" x2="462.75" y1="266" y2="272" stroke="#cfcfcf"/>
<text x="462.75" y="283" text-anchor="middle" font-size="10.5" fill="#555">2031</text>
<line x1="516.5" x2="516.5" y1="266" y2="272" stroke="#cfcfcf"/>
<text x="516.5" y="283" text-anchor="middle" font-size="10.5" fill="#555">2032</text>
<line x1="570.25" x2="570.25" y1="266" y2="272" stroke="#cfcfcf"/>
<text x="570.25" y="283" text-anchor="middle" font-size="10.5" fill="#555">2033</text>
<line x1="624.0" x2="624.0" y1="266" y2="272" stroke="#cfcfcf"/>
<text x="624.0" y="283" text-anchor="middle" font-size="10.5" fill="#555">2034</text>
<rect x="49.5" y="290.5" width="615" height="24" fill="#fff" stroke="#9a9a9a"/>
<rect x="506.5" y="291" width="157.5" height="23" fill="#e8e8e8"/>
<line x1="506.5" x2="506.5" y1="290" y2="315" stroke="#9a9a9a"/>
<rect x="45.5" y="295.5" width="7" height="13" rx="1.5" fill="#f4f4f4" stroke="#b8b8b8"/>
<line x1="48.5" x2="48.5" y1="298" y2="306" stroke="#c8c8c8"/>
<line x1="50.5" x2="50.5" y1="298" y2="306" stroke="#c8c8c8"/>
<rect x="502.5" y="295.5" width="7" height="13" rx="1.5" fill="#f4f4f4" stroke="#b8b8b8"/>
<line x1="505.5" x2="505.5" y1="298" y2="306" stroke="#c8c8c8"/>
<line x1="507.5" x2="507.5" y1="298" y2="306" stroke="#c8c8c8"/>
<rect x="47.5" y="329.5" width="12" height="12" fill="#f26130" stroke="#b9471f" stroke-width="0.8"/>
<text x="66" y="339" font-size="10.75" fill="#333">Coal (GWh)</text>
<rect x="47.5" y="348.5" width="12" height="12" fill="#f9a61d" stroke="#c27f10" stroke-width="0.8"/>
<text x="66" y="358" font-size="10.75" fill="#333">Oil (GWh)</text>
<rect x="135.5" y="329.5" width="12" height="12" fill="#58b55b" stroke="#3e8a41" stroke-width="0.8"/>
<text x="154" y="339" font-size="10.75" fill="#333">Gas Turbine (GWh)</text>
<rect x="135.5" y="348.5" width="12" height="12" fill="#41a8c9" stroke="#2e7e99" stroke-width="0.8"/>
<text x="154" y="358" font-size="10.75" fill="#333">CCGT (GWh)</text>
<rect x="258.5" y="329.5" width="12" height="12" fill="#3f51c8" stroke="#2d3a94" stroke-width="0.8"/>
<text x="277" y="339" font-size="10.75" fill="#333">Cascaded Hydro (GWh)</text>
<rect x="258.5" y="348.5" width="12" height="12" fill="#9a3fc8" stroke="#702c93" stroke-width="0.8"/>
<text x="277" y="358" font-size="10.75" fill="#333">Pump Storage (GWh)</text>
<rect x="402.5" y="329.5" width="12" height="12" fill="#c93d62" stroke="#962c48" stroke-width="0.8"/>
<text x="421" y="339" font-size="10.75" fill="#333">Solar RTPV (GWh)</text>
<rect x="402.5" y="348.5" width="12" height="12" fill="#888888" stroke="#666666" stroke-width="0.8"/>
<text x="421" y="358" font-size="10.75" fill="#333">Solar PV (GWh)</text>
<rect x="522.5" y="329.5" width="12" height="12" fill="#f26130" stroke="#b9471f" stroke-width="0.8"/>
<text x="541" y="339" font-size="10.75" fill="#333">Wind (GWh)</text>
<rect x="522.5" y="348.5" width="12" height="12" fill="#f9a61d" stroke="#c27f10" stroke-width="0.8"/>
<text x="541" y="358" font-size="10.75" fill="#333">Geothermal (GWh)</text>
<text x="15" y="25" font-size="11.5" fill="#333">Range Chart</text>
<line x1="634" x2="645" y1="16.5" y2="16.5" stroke="#333" stroke-width="1.3"/>
<path d="M654.5 17l8 8M662.5 17l-8 8" stroke="#333" stroke-width="1.3"/>
<rect x="645" y="50" width="19" height="67" fill="#f7f7f8"/>
<path d="M647 56.5h14M647 60.5h14M647 64.5h14" stroke="#999" stroke-width="1"/>
<path d="M653.5 80.5h-2.6a2.95 2.95 0 0 0 0 5.9h2.6M655.5 80.5h2.6a2.95 2.95 0 0 1 0 5.9h-2.6M651.5 83.5h6" fill="none" stroke="#999" stroke-width="1.1"/>
<path d="M648 105.5v6h13v-6M654.5 98v10M651 104.5l3.5 3.5 3.5-3.5" fill="none" stroke="#8a8a8a" stroke-width="1.4"/>
</svg></div><!-- /POPUP -->
</body></html>
